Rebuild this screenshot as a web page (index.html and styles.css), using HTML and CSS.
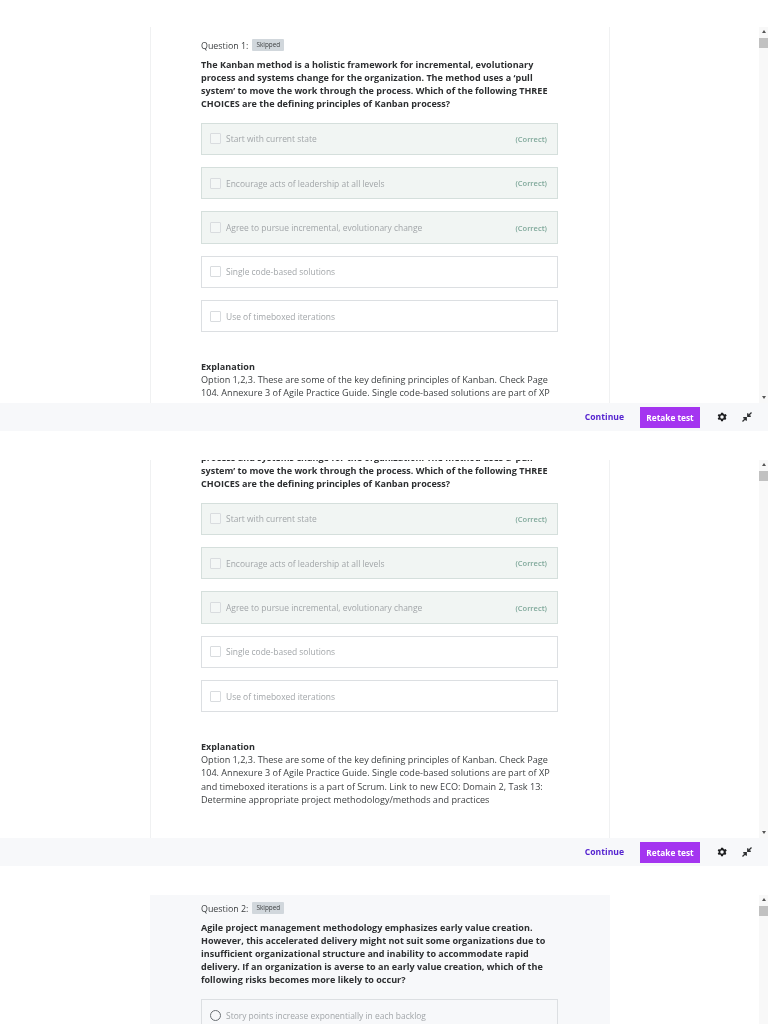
FILE: index.html
```html
<!DOCTYPE html>
<html lang="en">
<head>
<meta charset="utf-8">
<title>Practice test review</title>
<link rel="stylesheet" href="styles.css">
</head>
<body>
<section class="shot shot-first">
  <div class="view">
    <div class="panel">
      <div class="qhead"><span>Question 1:</span><span class="tag">Skipped</span></div>
      <p class="qtext">The Kanban method is a holistic framework for incremental, evolutionary process and systems change for the organization. The method uses a ‘pull system’ to move the work through the process. Which of the following THREE CHOICES are the defining principles of Kanban process?</p>
      <div class="opts">
        <div class="opt correct"><span class="box"></span><span class="label">Start with current state</span><span class="mark">(Correct)</span></div>
        <div class="opt correct"><span class="box"></span><span class="label">Encourage acts of leadership at all levels</span><span class="mark">(Correct)</span></div>
        <div class="opt correct"><span class="box"></span><span class="label">Agree to pursue incremental, evolutionary change</span><span class="mark">(Correct)</span></div>
        <div class="opt"><span class="box"></span><span class="label">Single code-based solutions</span></div>
        <div class="opt"><span class="box"></span><span class="label">Use of timeboxed iterations</span></div>
      </div>
      <h4 class="exhead">Explanation</h4>
      <p class="extext">Option 1,2,3. These are some of the key defining principles of Kanban. Check Page 104. Annexure 3 of Agile Practice Guide. Single code-based solutions are part of XP and timeboxed iterations is a part of Scrum. Link to new ECO: Domain 2, Task 13: Determine appropriate project methodology/methods and practices</p>
    </div>
    <div class="scrollbar"><span class="up"></span><span class="thumb"></span><span class="down"></span></div>
  </div>
  <div class="bar">
    <a class="continue">Continue</a>
    <button class="retake">Retake test</button>
    <svg class="ico gear" viewBox="0 0 24 24"><path d="M19.400 13a7.600 7.600 0 0 0 0-2l2.100-1.600-2-3.500-2.500 1a7.600 7.600 0 0 0-1.700-1L14 3.300h-4l-.4 2.600a7.600 7.600 0 0 0-1.700 1l-2.500-1-2 3.500L5.500 11a7.600 7.600 0 0 0 0 2l-2.100 1.600 2 3.500 2.500-1a7.600 7.600 0 0 0 1.700 1l.4 2.600h4l.4-2.600a7.600 7.600 0 0 0 1.700-1l2.500 1 2-3.500zM12 15.500a3.500 3.500 0 1 1 0-7 3.500 3.500 0 0 1 0 7z"/></svg>
    <svg class="ico shrink" viewBox="0 0 24 24"><path d="M21 3l-7 7M13.500 4.500v6h6M3 21l7-7M10.500 19.500v-6h-6"/></svg>
  </div>
</section>

<section class="shot shot-second">
  <div class="view">
    <div class="panel scrolled">
      <div class="qhead"><span>Question 1:</span><span class="tag">Skipped</span></div>
      <p class="qtext">The Kanban method is a holistic framework for incremental, evolutionary process and systems change for the organization. The method uses a ‘pull system’ to move the work through the process. Which of the following THREE CHOICES are the defining principles of Kanban process?</p>
      <div class="opts">
        <div class="opt correct"><span class="box"></span><span class="label">Start with current state</span><span class="mark">(Correct)</span></div>
        <div class="opt correct"><span class="box"></span><span class="label">Encourage acts of leadership at all levels</span><span class="mark">(Correct)</span></div>
        <div class="opt correct"><span class="box"></span><span class="label">Agree to pursue incremental, evolutionary change</span><span class="mark">(Correct)</span></div>
        <div class="opt"><span class="box"></span><span class="label">Single code-based solutions</span></div>
        <div class="opt"><span class="box"></span><span class="label">Use of timeboxed iterations</span></div>
      </div>
      <h4 class="exhead">Explanation</h4>
      <p class="extext">Option 1,2,3. These are some of the key defining principles of Kanban. Check Page 104. Annexure 3 of Agile Practice Guide. Single code-based solutions are part of XP and timeboxed iterations is a part of Scrum. Link to new ECO: Domain 2, Task 13: Determine appropriate project methodology/methods and practices</p>
    </div>
    <div class="scrollbar"><span class="up"></span><span class="thumb"></span><span class="down"></span></div>
  </div>
  <div class="bar">
    <a class="continue">Continue</a>
    <button class="retake">Retake test</button>
    <svg class="ico gear" viewBox="0 0 24 24"><path d="M19.400 13a7.600 7.600 0 0 0 0-2l2.100-1.600-2-3.500-2.500 1a7.600 7.600 0 0 0-1.700-1L14 3.300h-4l-.4 2.600a7.600 7.600 0 0 0-1.700 1l-2.500-1-2 3.500L5.500 11a7.600 7.600 0 0 0 0 2l-2.100 1.600 2 3.500 2.500-1a7.600 7.600 0 0 0 1.700 1l.4 2.600h4l.4-2.600a7.600 7.600 0 0 0 1.700-1l2.500 1 2-3.500zM12 15.500a3.500 3.500 0 1 1 0-7 3.500 3.500 0 0 1 0 7z"/></svg>
    <svg class="ico shrink" viewBox="0 0 24 24"><path d="M21 3l-7 7M13.500 4.500v6h6M3 21l7-7M10.500 19.500v-6h-6"/></svg>
  </div>
</section>

<section class="shot shot-third">
  <div class="view">
    <div class="panel shaded">
      <div class="qhead"><span>Question 2:</span><span class="tag">Skipped</span></div>
      <p class="qtext">Agile project management methodology emphasizes early value creation. However, this accelerated delivery might not suit some organizations due to insufficient organizational structure and inability to accommodate rapid delivery. If an organization is averse to an early value creation, which of the following risks becomes more likely to occur?</p>
      <div class="opts">
        <div class="opt"><span class="radio"></span><span class="label">Story points increase exponentially in each backlog</span></div>
      </div>
    </div>
    <div class="scrollbar"><span class="up"></span><span class="thumb"></span></div>
  </div>
</section>
</body>
</html>
```
FILE: styles.css
```css
* { box-sizing: border-box; }
html, body { margin: 0; padding: 0; height: 1024px; overflow: hidden; background: #fff; }
body {
  font-family: "Open Sans", "Noto Sans", sans-serif;
  color: #1c1d1f;
  padding-top: 27px;
  filter: blur(0.45px);
}
.shot { margin-bottom: 29px; }
.shot-first .view { height: 376px; }
.shot-second .view { height: 378px; }
.shot-third { margin-bottom: 0; }
.shot-third .view { height: 129px; }

.view { position: relative; display: flex; overflow: hidden; }
.panel {
  width: 460px;
  margin-left: 150px;
  padding: 11px 50px 0 50px;
  border-left: 1px solid #f0f1f2;
  border-right: 1px solid #f0f1f2;
  overflow: hidden;
}
.scrolled > .qhead { margin-top: -53px; }
.shaded { background: #f7f8fa; border: 0; padding: 6px 50px 0 51px; }

.qhead {
  display: flex;
  align-items: center;
  gap: 4px;
  height: 14px;
  font-size: 8.900px;
  color: #3e4143;
}
.tag {
  font-size: 6.400px;
  line-height: 12px;
  height: 12px;
  padding: 0 4px;
  background: #d1d7dc;
  border-radius: 1px;
  color: #3e4143;
}
.qtext {
  margin: 5.600px 0 0;
  font-size: 9.050px;
  line-height: 13.200px;
  font-weight: 700;
  color: #2d2f31;
  width: 356px;
}
.opts {
  display: flex;
  flex-direction: column;
  gap: 12px;
  margin-top: 12.400px;
  width: 357px;
}
.opt {
  display: flex;
  align-items: center;
  height: 32.300px;
  flex: none;
  padding: 0 10px 0 8px;
  border: 1px solid #dcdfe2;
  font-size: 8.450px;
  color: #a2a6a9;
}
.correct { background: #f1f5f3; border-color: #d5dfdc; }
.box {
  width: 11px;
  height: 11px;
  flex: none;
  background: #fff;
  border: 1px solid #d9dcdf;
  border-radius: 1px;
}
.correct .box { background: #f4f7f6; }
.radio {
  width: 11px;
  height: 11px;
  flex: none;
  border: 1.500px solid #6a6f73;
  border-radius: 50%;
}
.label { margin-left: 5px; flex: 1; }
.mark { font-size: 7.500px; font-weight: 600; color: #7fa89a; }

.exhead {
  margin: 29px 0 0;
  font-size: 9.050px;
  line-height: 12px;
  font-weight: 700;
  color: #2d2f31;
}
.extext {
  margin: 0;
  font-size: 9.100px;
  line-height: 13.200px;
  color: #3e4143;
  width: 357px;
}

.scrollbar {
  position: absolute;
  top: 0;
  right: 0;
  bottom: 0;
  width: 9px;
  background: #f8f8f8;
}
.up, .down {
  position: absolute;
  left: 2.500px;
  width: 0;
  height: 0;
  border-left: 2px solid transparent;
  border-right: 2px solid transparent;
}
.up { top: 3px; border-bottom: 3px solid #555; }
.down { bottom: 4px; border-top: 3px solid #555; }
.thumb {
  position: absolute;
  top: 11px;
  left: 0;
  width: 9px;
  height: 10px;
  background: #c1c1c1;
}

.bar {
  display: flex;
  align-items: center;
  justify-content: flex-end;
  height: 28px;
  padding-right: 15px;
  background: #f7f8fa;
}
.continue {
  margin-right: 16px;
  font-size: 8.600px;
  font-weight: 700;
  color: #5624d0;
}
.retake {
  width: 60px;
  height: 21px;
  margin-right: 16px;
  padding: 0;
  border: 0;
  background: #a435f0;
  color: #fff;
  font: 700 8.300px "Open Sans", sans-serif;
}
.ico { width: 12px; height: 12px; flex: none; fill: #1c1d1f; }
.shrink { margin-left: 13px; fill: none; stroke: #2d2f31; stroke-width: 2.600; }
```
